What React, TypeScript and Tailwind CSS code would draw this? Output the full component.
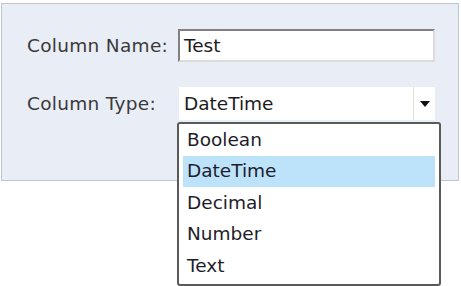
import React from "react";

const OPTIONS = ["Boolean", "DateTime", "Decimal", "Number", "Text"];
const SELECTED = "DateTime";

export default function App() {
  return (
    <div className="relative w-[461px] h-[286px] bg-white overflow-hidden" style={{ fontFamily: '"DejaVu Sans", Verdana, sans-serif' }}>
      {/* form panel */}
      <div className="ml-px mt-[3px] w-[458px] h-[178px] border border-[#bcc4d3] bg-[#e9edf6] pt-[25px] pl-[25px]">
        <div className="flex items-center h-[33px]">
          <label className="w-[151px] text-[18.5px] text-[#3a3a3a] tracking-[0.3px]">Column Name:</label>
          <div className="w-[257px] h-[33px] bg-white border-2 border-t-[#808080] border-l-[#808080] border-r-[#dcdcdc] border-b-[#dcdcdc] flex items-center pl-[4px] text-[18.5px] text-[#1c1c1c]">
            Test
          </div>
        </div>
        <div className="flex items-center h-[33px] mt-[25px]">
          <label className="w-[152px] text-[18.5px] text-[#3a3a3a] tracking-[0.3px]">Column Type:</label>
          <div className="w-[256px] h-[33px] bg-white flex items-center">
            <span className="flex-1 pl-[5px] text-[18.5px] text-[#1c1c1c]">{SELECTED}</span>
            <div className="w-[22px] h-full border-l border-[#e2e2d4] flex items-center justify-center">
              <svg width="10" height="6" viewBox="0 0 10 6">
                <path d="M0 0h10L5 6z" fill="#111" />
              </svg>
            </div>
          </div>
        </div>
      </div>

      {/* open dropdown list */}
      <ul className="absolute left-[177px] top-[122px] w-[264px] h-[164px] bg-white border-2 border-[#5a5a5a] rounded-[3px] px-[4px]">
        {OPTIONS.map((o) => (
          <li
            key={o}
            className={`h-[31.5px] flex items-center pl-[4px] text-[18.5px] text-[#1e1e2a] ${o === SELECTED ? "bg-[#bde3fb]" : ""}`}
          >
            {o}
          </li>
        ))}
      </ul>
    </div>
  );
}
